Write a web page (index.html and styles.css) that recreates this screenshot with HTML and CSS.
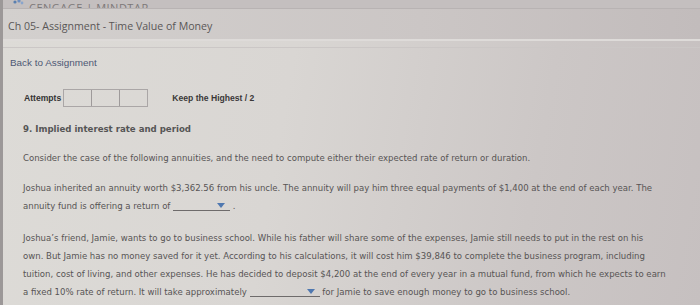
FILE: index.html
```html
<!DOCTYPE html>
<html>
<head>
<meta charset="utf-8">
<link rel="stylesheet" href="styles.css">
</head>
<body>
<div class="page">
  <div class="brand">
    <svg class="logo" width="14" height="8" viewBox="0 0 14 8"><circle cx="4" cy="2" r="1.6" fill="#5a7fb0"/><circle cx="8" cy="1" r="1.6" fill="#6f8fc0"/><circle cx="11" cy="3" r="1.4" fill="#8aa5cc"/></svg>
    <span class="brand-text">CENGAGE | MINDTAP</span>
  </div>
  <div class="titlebar">Ch 05- Assignment - Time Value of Money</div>
  <div class="sep"></div>
  <div class="content">
    <a class="back">Back to Assignment</a>
    <div class="attempts">
      <span class="label">Attempts</span>
      <div class="boxes"><span></span><span></span><span></span></div>
      <span class="keep">Keep the Highest / 2</span>
    </div>
    <h2 class="qtitle">9. Implied interest rate and period</h2>
    <p class="intro">Consider the case of the following annuities, and the need to compute either their expected rate of return or duration.</p>
    <p class="para">Joshua inherited an annuity worth $3,362.56 from his uncle. The annuity will pay him three equal payments of $1,400 at the end of each year. The<br>annuity fund is offering a return of <span class="dd dd1"><span class="arrow"></span></span> .</p>
    <p class="para p2">Joshua’s friend, Jamie, wants to go to business school. While his father will share some of the expenses, Jamie still needs to put in the rest on his<br>own. But Jamie has no money saved for it yet. According to his calculations, it will cost him $39,846 to complete the business program, including<br>tuition, cost of living, and other expenses. He has decided to deposit $4,200 at the end of every year in a mutual fund, from which he expects to earn<br>a fixed 10% rate of return. It will take approximately <span class="dd dd2"><span class="arrow"></span></span> for Jamie to save enough money to go to business school.</p>
  </div>
</div>
</body>
</html>
```
FILE: styles.css
```css
html, body { margin: 0; padding: 0; }
body {
  width: 700px;
  height: 305px;
  overflow: hidden;
  background: #d6d3d0;
}
.page {
  height: 305px;
  border-left: 3px solid #9c9898;
  background: linear-gradient(100deg, #dddbd7 0%, #d9d6d3 40%, #ccc7c6 75%, #c6c0c0 100%);
  box-sizing: border-box;
}
.brand {
  height: 8px;
  background: #c4bfbf;
  display: flex;
  align-items: flex-end;
  padding-left: 8px;
  overflow: hidden;
  gap: 4px;
}
.brand-text {
  font-family: "Open Sans", sans-serif;
  font-size: 11px;
  color: #7c7878;
  line-height: 11px;
  margin-bottom: -5px;
  letter-spacing: 0.5px;
}
.titlebar {
  height: 30px;
  background: linear-gradient(90deg, #d3d0ce 0%, #cbc6c5 60%, #c2bcbc 100%);
  font-family: "Open Sans", sans-serif;
  font-size: 10.6px;
  color: #5a5757;
  padding-left: 5px;
  line-height: 34px;
  border-top: 1px solid #b8b3b3;
}
.sep {
  height: 6px;
  border-top: 2px solid #dedbd9;
  border-bottom: 1px solid #cbc7c6;
}
.content {
  padding: 0 0 0 19px;
  width: 670px;
}
.back {
  display: block;
  font-family: "Liberation Sans", Arial, sans-serif;
  font-size: 9.9px;
  color: #4d5874;
  margin: 9px 0 0 -12px;
  line-height: 12px;
}
.attempts {
  display: flex;
  align-items: center;
  margin-top: 20px;
  font-family: "Liberation Sans", Arial, sans-serif;
  font-size: 8.6px;
  font-weight: bold;
  color: #333;
}
.label { margin-left: 2px; }
.boxes {
  display: flex;
  margin-left: 2px;
  border: 1px solid #aaa6a6;
}
.boxes span {
  width: 27px;
  height: 16px;
  border-right: 1px solid #9e9a9a;
}
.boxes span:last-child { width: 27px; border-right: none; }
.keep { margin-left: 24px; color: #3a3838; }
.qtitle {
  margin: 16px 0 0 1px;
  font-family: "DejaVu Sans", Verdana, sans-serif;
  font-size: 8.6px;
  font-weight: bold;
  color: #555;
  line-height: 12px;
}
.intro, .para {
  font-family: "DejaVu Sans", Verdana, sans-serif;
  font-size: 8.55px;
  color: #575454;
  line-height: 18px;
  margin: 0 0 0 1px;
  white-space: nowrap;
}
.intro { margin-top: 14px; }
.para { margin-top: 12px; }
.para.p2 { margin-top: 14px; }
.dd {
  display: inline-block;
  position: relative;
  height: 9px;
  border-bottom: 1px solid #6e6b6b;
  vertical-align: -2px;
}
.dd1 { width: 57px; }
.dd2 { width: 70px; }
.arrow {
  position: absolute;
  right: 5px;
  top: 2px;
  width: 0; height: 0;
  border-left: 4px solid transparent;
  border-right: 4px solid transparent;
  border-top: 5px solid #4f78b0;
}
```
